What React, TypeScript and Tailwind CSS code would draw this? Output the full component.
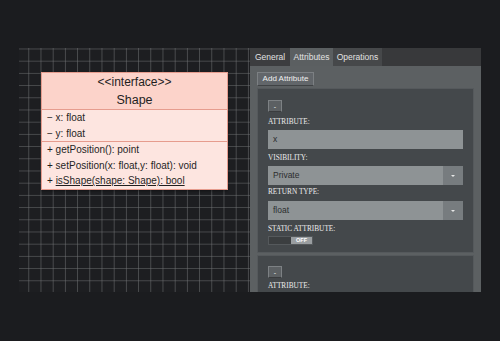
import React from "react";

const sans = { fontFamily: '"Liberation Sans", Arial, sans-serif' };
const serif = { fontFamily: '"Liberation Serif", "Times New Roman", serif' };

const GridCanvas: React.FC<{ children: React.ReactNode }> = ({ children }) => (
  <div className="relative w-[231px] h-[244px] bg-[#1d1e21] overflow-hidden">
    <svg className="absolute inset-0" width="231" height="244">
      <defs>
        <pattern id="grid" x="9.3" y="0.5" width="12.2" height="12.2" patternUnits="userSpaceOnUse">
          <path d="M0 0 H12.2 M0 0 V12.2" stroke="#747578" strokeWidth="1" fill="none" />
        </pattern>
      </defs>
      <rect width="231" height="244" fill="url(#grid)" />
    </svg>
    {children}
  </div>
);

const UmlClass: React.FC = () => (
  <div
    className="absolute left-[22px] top-[24px] w-[187px] border border-[#e69c8e] text-[#1f1f1f] shadow-[0_1px_2px_rgba(0,0,0,0.4)]"
    style={sans}
  >
    <div className="bg-[#fcd3ca] border-b border-[#e69c8e] text-center">
      <div className="text-[12px] leading-[18px]">&lt;&lt;interface&gt;&gt;</div>
      <div className="text-[12.5px] leading-[18px]">Shape</div>
    </div>
    <div className="bg-[#fde5e0] border-b border-[#e69c8e] px-[5px] text-[10px] leading-[15.5px]">
      <div>− x: float</div>
      <div>− y: float</div>
    </div>
    <div className="bg-[#fde5e0] px-[5px] text-[10px] leading-[15.5px]">
      <div>+ getPosition(): point</div>
      <div>+ setPosition(x: float,y: float): void</div>
      <div>
        + <span className="underline">isShape(shape: Shape): bool</span>
      </div>
    </div>
  </div>
);

const Label: React.FC<{ text: string; className?: string }> = ({ text, className }) => (
  <div className={`text-[7.3px] leading-[9px] text-[#ececec] ${className ?? ""}`} style={serif}>
    {text}
  </div>
);

const SelectBox: React.FC<{ value: string; className?: string }> = ({ value, className }) => (
  <div className={`flex h-[19px] w-[195px] bg-[#8e9395] ${className ?? ""}`}>
    <div className="flex-1 flex items-center pl-[5px] text-[8.5px] text-[#2b2d2e]" style={sans}>
      {value}
    </div>
    <div className="w-[20px] bg-[#777c7f] flex items-center justify-center">
      <div className="w-0 h-0 border-l-[2px] border-r-[2px] border-t-[2px] border-l-transparent border-r-transparent border-t-[#e8e8e8]" />
    </div>
  </div>
);

const MinusButton: React.FC = () => (
  <div className="w-[14px] h-[12px] bg-[#5c6063] border border-[#7d8184] border-b-[#3a3c3e] flex items-center justify-center text-[7px] text-[#eee] leading-none" style={sans}>
    -
  </div>
);

const AttributeCard: React.FC<{ collapsed?: boolean }> = ({ collapsed }) => (
  <div
    className={`bg-[#44484b] border border-[#55595c] px-[10px] ${
      collapsed ? "h-[60px] pt-[10px]" : "pt-[11px] pb-[7px]"
    }`}
  >
    <MinusButton />
    <Label text="ATTRIBUTE:" className={collapsed ? "mt-[3px]" : "mt-[5px]"} />
    {!collapsed && (
      <>
        <div className="mt-[4px] h-[19px] w-[195px] bg-[#8e9395] flex items-center pl-[5px] text-[8.5px] text-[#2b2d2e]" style={sans}>
          x
        </div>
        <Label text="VISIBILITY:" className="mt-[4px]" />
        <SelectBox value="Private" className="mt-[4px]" />
        <Label text="RETURN TYPE:" className="mt-[2px]" />
        <SelectBox value="float" className="mt-[5px]" />
        <Label text="STATIC ATTRIBUTE:" className="mt-[4px]" />
        <div className="mt-[3px] flex h-[9px] w-[45px] border border-[#55595c]" style={sans}>
          <div className="w-[22px] bg-[#3b3e40]" />
          <div className="flex-1 bg-[#9a9ea1] flex items-center justify-center text-[5.5px] font-bold text-white leading-none">
            OFF
          </div>
        </div>
      </>
    )}
  </div>
);

const PropertiesPanel: React.FC = () => (
  <div className="w-[231px] h-[244px] flex flex-col" style={sans}>
    <div className="flex h-[18px] bg-[#38393b] text-[8.5px] text-[#e2e2e2]">
      <div className="w-[40px] flex items-center justify-center bg-[#3c3d3f]">General</div>
      <div className="w-[43px] flex items-center justify-center bg-[#5b5f61]">Attributes</div>
      <div className="w-[49px] flex items-center justify-center bg-[#46484a]">Operations</div>
    </div>
    <div className="flex-1 bg-[#5c6062] px-[7px] pt-[6px] overflow-hidden">
      <div className="w-[57px] h-[14px] bg-[#62666a] border border-[#7c8083] border-b-[#404345] flex items-center justify-center text-[8px] text-[#f0f0f0]">
        Add Attribute
      </div>
      <div className="mt-[2px] flex flex-col gap-[2px]">
        <AttributeCard />
        <AttributeCard collapsed />
      </div>
    </div>
  </div>
);

export default function App() {
  return (
    <div className="w-[500px] h-[341px] bg-[#1b1c1f] pt-[48px] pl-[19px] flex items-start">
      <GridCanvas>
        <UmlClass />
      </GridCanvas>
      <PropertiesPanel />
    </div>
  );
}
